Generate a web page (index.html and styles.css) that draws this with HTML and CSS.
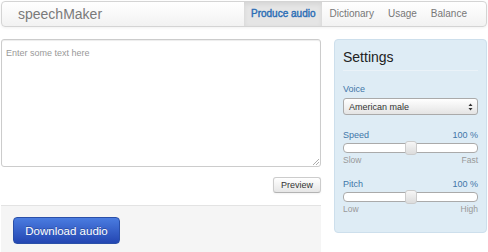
FILE: index.html
```html
<!DOCTYPE html>
<html>
<head>
<meta charset="utf-8">
<link rel="stylesheet" href="styles.css">
</head>
<body>
<div class="page">
  <div class="navbar">
    <div class="brand">speechMaker</div>
    <ul class="nav">
      <li class="active">Produce audio</li>
      <li>Dictionary</li>
      <li>Usage</li>
      <li>Balance</li>
    </ul>
  </div>
  <div class="main">
    <div class="left">
      <div class="textarea">
        <span class="placeholder">Enter some text here</span>
        <svg class="grip" width="6" height="6" viewBox="0 0 6 6"><path d="M0 6L6 0M3 6L6 3" stroke="#999" stroke-width="0.8"/></svg>
      </div>
      <div class="preview-row"><button class="btn">Preview</button></div>
      <div class="well"><button class="btn-primary">Download audio</button></div>
    </div>
    <div class="settings">
      <h3>Settings</h3>
      <div class="label">Voice</div>
      <div class="select">
        <span>American male</span>
        <svg width="5" height="8" viewBox="0 0 5 8"><path d="M2.5 0.5L4.5 3H0.5Z M2.5 7.5L4.5 5H0.5Z" fill="#333"/></svg>
      </div>
      <div class="label-row"><span>Speed</span><span>100 %</span></div>
      <div class="slider"><div class="handle"></div></div>
      <div class="ends"><span>Slow</span><span>Fast</span></div>
      <div class="label-row pitch"><span>Pitch</span><span>100 %</span></div>
      <div class="slider"><div class="handle"></div></div>
      <div class="ends"><span>Low</span><span>High</span></div>
    </div>
  </div>
</div>
</body>
</html>
```
FILE: styles.css
```css
* { box-sizing: border-box; }
html, body { margin: 0; padding: 0; background: #fff; }
body { font-family: "Liberation Sans", Arial, sans-serif; color: #333; }
.page { padding: 1px 1px 0 1px; width: 488px; height: 252px; overflow: hidden; }

.navbar {
  width: 486px; height: 26px;
  display: flex; align-items: stretch; justify-content: space-between;
  border: 1px solid #d4d4d4; border-radius: 4px;
  background: linear-gradient(#ffffff, #f2f2f2);
  box-shadow: 0 1px 3px rgba(0,0,0,0.06);
}
.brand { padding-left: 16px; font-size: 14px; color: #7a7a7a; line-height: 24px; }
.nav { list-style: none; margin: 0 12px 0 0; padding: 0; display: flex; }
.nav li { font-size: 10px; color: #777; padding: 0 7px; line-height: 24px; }
.nav li.active {
  color: #2a6db5; background: #e5e5e5; -webkit-text-stroke: 0.4px #2a6db5;
  box-shadow: inset 0 2px 5px rgba(0,0,0,0.08);
}

.main { display: flex; gap: 13px; margin-top: 12px; }
.left { width: 320px; }
.textarea {
  position: relative; height: 128px; border: 1px solid #ccc; border-radius: 3px;
  box-shadow: inset 0 1px 1px rgba(0,0,0,0.075); padding: 2px 4px;
}
.placeholder { font-size: 9px; color: #999; line-height: 12px; }
.grip { position: absolute; right: 1px; bottom: 1px; }
.preview-row { display: flex; justify-content: flex-end; margin-top: 10px; }
.btn {
  font-family: inherit; font-size: 9px; color: #333; height: 16px; width: 48px; padding: 0;
  border: 1px solid #ccc; border-bottom-color: #b3b3b3; border-radius: 3px;
  background: linear-gradient(#ffffff, #e6e6e6);
  box-shadow: 0 1px 2px rgba(0,0,0,0.05);
}
.well {
  margin-top: 12px; height: 60px; background: #f5f5f5; border-top: 1px solid #e3e3e3;
  padding: 11px 0 0 12px;
}
.btn-primary {
  font-family: inherit; font-size: 11.5px; color: #fff; height: 27px; width: 107px; padding: 0;
  border: 1px solid #2a4fa8; border-radius: 4px;
  background: linear-gradient(#4a7ce0, #2446b2);
  text-shadow: 0 -1px 0 rgba(0,0,0,0.25);
}

.settings {
  width: 153px; height: 194px; background: #deecf5; border: 1px solid #cddfec; border-radius: 4px;
  padding: 8px 8px 0 8px;
}
.settings h3 {
  margin: 0; font-weight: normal; font-size: 14px; color: #222; line-height: 18px; padding-bottom: 4px;
  border-bottom: 1px solid #eaf2f8;
}
.label { margin-top: 12px; font-size: 9px; color: #3f76a8; line-height: 12px; }
.select {
  margin-top: 3px; height: 17px; border: 1px solid #aaa; border-radius: 3px;
  background: linear-gradient(#ffffff, #e4e4e4);
  display: flex; align-items: center; justify-content: space-between; padding: 0 4px 0 5px;
  font-size: 9px; color: #333;
}
.label-row { display: flex; justify-content: space-between; margin-top: 14px; font-size: 9px; color: #3f76a8; line-height: 12px; }
.label-row.pitch { margin-top: 13px; }
.slider {
  position: relative; margin-top: 2px; height: 10px; border: 1px solid #aaa; border-radius: 4px; background: #fff;
}
.handle {
  position: absolute; left: 61px; top: -3px; width: 12px; height: 14px; border: 1px solid #ccc; border-radius: 3px;
  background: linear-gradient(#f6f6f6, #dcdcdc);
}
.ends { display: flex; justify-content: space-between; font-size: 8.5px; color: #999; margin-top: 2px; line-height: 10px; }
```
